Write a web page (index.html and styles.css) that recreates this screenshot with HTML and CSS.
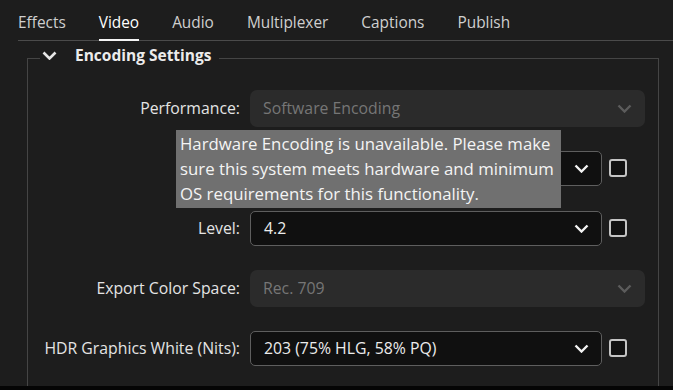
FILE: index.html
```html
<html>
	<head>
		<title>Export Settings</title>
		<meta name="viewport" content="width=device-width, initial-scale=1">
		<link rel="stylesheet" href="styles.css">
	</head>
	<body>
		<div class="page">
			<nav class="tabs">
				<span class="tab">Effects</span>
				<span class="tab active">Video</span>
				<span class="tab">Audio</span>
				<span class="tab">Multiplexer</span>
				<span class="tab">Captions</span>
				<span class="tab">Publish</span>
			</nav>
			<fieldset class="group">
				<legend class="group-title">
					<svg class="group-chevron" width="15" height="9" viewBox="0 0 15 9"><path d="M1.5 1.5 L7.5 7.5 L13.5 1.5" fill="none" stroke="#e6e6e6" stroke-width="2.6"/></svg>
					Encoding Settings
				</legend>
				<div class="row">
					<label class="label">Performance:</label>
					<div class="select disabled">
						<span>Software Encoding</span>
						<svg class="chev" width="15" height="9" viewBox="0 0 15 9"><path d="M1.5 1.5 L7.5 7.5 L13.5 1.5" fill="none" stroke="#5c5c5c" stroke-width="2.4"/></svg>
					</div>
				</div>
				<div class="row">
					<label class="label"></label>
					<div class="select">
						<span></span>
						<svg class="chev" width="15" height="9" viewBox="0 0 15 9"><path d="M1.5 1.5 L7.5 7.5 L13.5 1.5" fill="none" stroke="#f2f2f2" stroke-width="2.4"/></svg>
					</div>
					<span class="check"></span>
				</div>
				<div class="row">
					<label class="label">Level:</label>
					<div class="select">
						<span>4.2</span>
						<svg class="chev" width="15" height="9" viewBox="0 0 15 9"><path d="M1.5 1.5 L7.5 7.5 L13.5 1.5" fill="none" stroke="#f2f2f2" stroke-width="2.4"/></svg>
					</div>
					<span class="check"></span>
				</div>
				<div class="row">
					<label class="label">Export Color Space:</label>
					<div class="select disabled">
						<span>Rec. 709</span>
						<svg class="chev" width="15" height="9" viewBox="0 0 15 9"><path d="M1.5 1.5 L7.5 7.5 L13.5 1.5" fill="none" stroke="#5c5c5c" stroke-width="2.4"/></svg>
					</div>
				</div>
				<div class="row">
					<label class="label">HDR Graphics White (Nits):</label>
					<div class="select">
						<span>203 (75% HLG, 58% PQ)</span>
						<svg class="chev" width="15" height="9" viewBox="0 0 15 9"><path d="M1.5 1.5 L7.5 7.5 L13.5 1.5" fill="none" stroke="#f2f2f2" stroke-width="2.4"/></svg>
					</div>
					<span class="check"></span>
				</div>
				<div class="tooltip">Hardware Encoding is unavailable. Please make sure this system meets hardware and minimum OS requirements for this functionality.</div>
			</fieldset>
		</div>
		<div class="bottom-bar"></div>
	</body>
</html>
```
FILE: styles.css
```css
*{
	box-sizing: border-box;
}
body{
	margin: 0;
	padding: 0;
	background-color: #1d1d1d;
	font-family: "Open Sans", "Noto Sans", sans-serif;
	color: #e2e2e2;
	height: 390px;
	overflow: hidden;
}
.page{
	height: 386px;
	overflow: hidden;
}
.tabs{
	display: flex;
	gap: 33px;
	margin-left: 18px;
	height: 41px;
	border-bottom: 1px solid #4b4b4b;
}
.tab{
	padding-top: 12px;
	font-size: 15.4px;
	color: #cfcfcf;
	height: 41px;
}
.tab.active{
	color: #fff;
	border-bottom: 2px solid #f4f4f4;
	margin-bottom: -1px;
}
.group{
	position: relative;
	margin: 3px 14px 0 27px;
	padding: 0 0 40px 0;
	border: 1px solid #454545;
	height: 400px;
}
.group-title{
	margin-left: 12px;
	padding: 0 8px 6px 2px;
	font-size: 15.5px;
	font-weight: 700;
	color: #ececec;
	display: flex;
	align-items: center;
}
.group-chevron{
	margin-right: 18px;
}
.row{
	display: flex;
	align-items: center;
	height: 60px;
}
.row:first-of-type{
	margin-top: 6px;
}
.label{
	width: 212px;
	margin-right: 10px;
	text-align: right;
	font-size: 15.8px;
	color: #e4e4e4;
}
.select{
	display: flex;
	align-items: center;
	justify-content: space-between;
	width: 352px;
	height: 35px;
	padding: 0 12px 0 13px;
	background-color: #101010;
	border: 1px solid #5e5e5e;
	border-radius: 5px;
	font-size: 15.8px;
	color: #ececec;
}
.select.disabled{
	width: 395px;
	height: 37px;
	padding-right: 13px;
	background-color: #2b2b2b;
	border: 0;
	border-radius: 7px;
	color: #767676;
}
.check{
	width: 18px;
	height: 18px;
	margin-left: 7px;
	border: 2px solid #c4c4c4;
	border-radius: 3px;
	background-color: #111;
}
.tooltip{
	position: absolute;
	left: 148px;
	top: 58px;
	width: 385px;
	height: 78px;
	padding: 1px 4px;
	background-color: #707070;
	color: #f4f4f4;
	font-size: 16.8px;
	line-height: 25px;
}
.bottom-bar{
	height: 4px;
	background-color: #050505;
}
```
